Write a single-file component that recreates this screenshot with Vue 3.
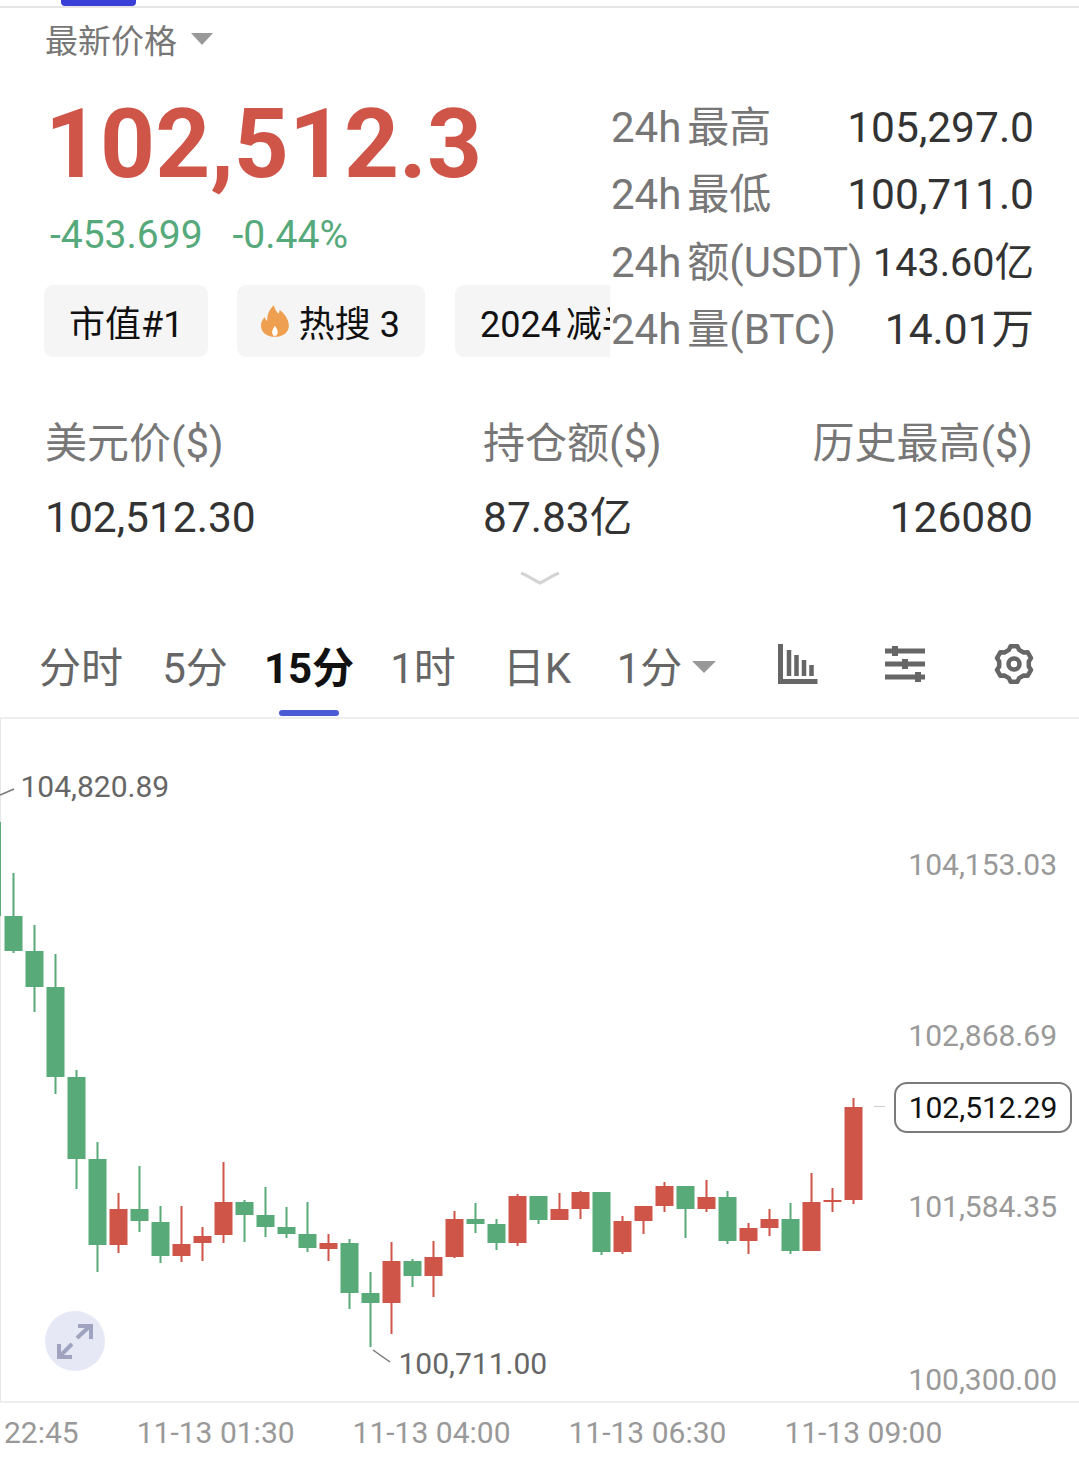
<script setup>
// [center x, wick top, wick bottom, body top, body bottom, up?]
const G = 0
const R = 1
const candles = [
  [0, 822, 916, 916, 916, G],
  [13.5, 873, 953, 916, 951, G],
  [34.5, 925, 1012, 951, 987, G],
  [55.5, 954, 1094, 987, 1077, G],
  [76.5, 1070, 1189, 1077, 1159, G],
  [97.5, 1142, 1272, 1159, 1245, G],
  [118.5, 1193, 1253, 1209, 1245, R],
  [139.5, 1166, 1232, 1209, 1221, G],
  [160.5, 1206, 1263, 1222, 1256, G],
  [181.5, 1206, 1262, 1244, 1256, R],
  [202.5, 1227, 1261, 1236, 1243, R],
  [223.5, 1162, 1243, 1202, 1235, R],
  [244.5, 1200, 1242, 1202, 1215, G],
  [265.5, 1187, 1237, 1215, 1227, G],
  [286.5, 1207, 1238, 1227, 1234, G],
  [307.5, 1202, 1252, 1234, 1248, G],
  [328.5, 1234, 1261, 1243, 1249, R],
  [349.5, 1239, 1309, 1243, 1293, G],
  [370.5, 1272, 1347, 1293, 1303, G],
  [391.5, 1242, 1334, 1261, 1303, R],
  [412.5, 1259, 1287, 1261, 1276, G],
  [433.5, 1241, 1297, 1257, 1276, R],
  [454.5, 1211, 1258, 1219, 1257, R],
  [475.5, 1203, 1233, 1219, 1224, G],
  [496.5, 1219, 1250, 1224, 1243, G],
  [517.5, 1194, 1246, 1196, 1243, R],
  [538.5, 1196, 1224, 1196, 1220, G],
  [559.5, 1193, 1220, 1209, 1220, R],
  [580.5, 1191, 1219, 1192, 1209, R],
  [601.5, 1192, 1255, 1192, 1252, G],
  [622.5, 1216, 1254, 1221, 1252, R],
  [643.5, 1206, 1234, 1206, 1221, R],
  [664.5, 1182, 1212, 1186, 1206, R],
  [685.5, 1186, 1238, 1186, 1209, G],
  [706.5, 1180, 1212, 1197, 1209, R],
  [727.5, 1191, 1244, 1197, 1241, G],
  [748.5, 1223, 1254, 1228, 1241, R],
  [769.5, 1209, 1236, 1219, 1228, R],
  [790.5, 1203, 1254, 1219, 1251, G],
  [811.5, 1173, 1251, 1202, 1251, R],
  [832.5, 1188, 1212, 1200, 1202, R],
  [853.5, 1098, 1204, 1107, 1200, R],
]

const summaryStats = [
  { label: '最高', value: '105,297.0' },
  { label: '最低', value: '100,711.0' },
  { label: '额(USDT)', value: '143.60亿', small: true },
  { label: '量(BTC)', value: '14.01万' },
]

const metrics = [
  { label: '美元价($)', value: '102,512.30' },
  { label: '持仓额($)', value: '87.83亿' },
  { label: '历史最高($)', value: '126080' },
]

const tabs = ['分时', '5分', '15分', '1时', '日K']
const axisPrices = [
  { y: 875, text: '104,153.03' },
  { y: 1046, text: '102,868.69' },
  { y: 1217, text: '101,584.35' },
  { y: 1390, text: '100,300.00' },
]
const times = ['22:45', '11-13 01:30', '11-13 04:00', '11-13 06:30', '11-13 09:00']

// six-lobed gear outline for the settings icon
function gearPath() {
  const pts = []
  for (let i = 0; i < 6; i++) {
    const a = (i * 60 - 90) * Math.PI / 180
    for (const [off, r] of [[-20, 15], [-11, 18], [11, 18], [20, 15]]) {
      const t = a + off * Math.PI / 180
      pts.push(`${(20 + r * Math.cos(t)).toFixed(1)} ${(20 + r * Math.sin(t)).toFixed(1)}`)
    }
  }
  return 'M' + pts.join('L') + 'Z'
}
</script>

<template>
  <div class="page">
    <div class="top-tab"><span class="top-bar"></span></div>

    <div class="summary">
      <div class="summary-left">
        <div class="price-mode">最新价格<i class="caret caret-lg"></i></div>
        <div class="last-price">102,512.3</div>
        <div class="change"><span>-453.699</span><span>-0.44%</span></div>
        <div class="chips">
          <div class="chip chip-a">市值#1</div>
          <div class="chip chip-b">
            <svg class="flame" viewBox="0 0 30 34" width="30" height="34">
              <path d="M14 0c1 5 3 7 5 9 1-1 1-3 1-4 5 4 10 10 10 17 0 7-6 12-15 12S0 29 0 22c0-4 2-7 4-9 1 2 1 3 3 4C6 11 9 4 14 0z" fill="#ee9f4f" />
              <path d="M15 22c2 3 3 5 3 7s-1 4-3 4-3-2-3-4 1-4 3-7z" fill="#fff" />
            </svg>
            <span>热搜 3</span>
          </div>
          <div class="chip chip-c">2024 减半</div>
        </div>
      </div>
      <div class="summary-right">
        <div v-for="s in summaryStats" :key="s.label" class="stat">
          <span class="stat-label"><span class="stat-prefix">24h</span>{{ s.label }}</span>
          <span class="stat-value" :class="{ small: s.small }">{{ s.value }}</span>
        </div>
      </div>
    </div>

    <div class="metrics">
      <div v-for="m in metrics" :key="m.label" class="metric">
        <div class="metric-label">{{ m.label }}</div>
        <div class="metric-value">{{ m.value }}</div>
      </div>
    </div>

    <div class="more">
      <svg width="42" height="16" viewBox="0 0 42 16">
        <path d="M2 3 C12 7 16 11 21 13 C26 11 30 7 40 3" fill="none" stroke="#d4d4d4" stroke-width="3" />
      </svg>
    </div>

    <div class="tabs">
      <div v-for="t in tabs" :key="t" class="tab" :class="{ active: t === '15分' }">{{ t }}</div>
      <div class="tab tab-period">1分<i class="caret caret-tab"></i></div>
      <div class="tool tool-first">
        <svg class="icon-bars" width="40" height="40" viewBox="0 0 40 40">
          <path d="M2.500 0v37.500h37" fill="none" stroke="#666" stroke-width="5" />
          <path d="M11 6v26M18.500 11v21M26 16v16M33.500 21v11" fill="none" stroke="#666" stroke-width="4.500" />
        </svg>
      </div>
      <div class="tool">
        <svg width="40" height="36" viewBox="0 0 40 36">
          <path d="M0 5h40M0 18h40M0 31h40" stroke="#666" stroke-width="5" />
          <path d="M7 0h6v10h-6zM17 13h6v10h-6zM30 26h6v10h-6z" fill="#666" />
        </svg>
      </div>
      <div class="tool">
        <svg class="icon-gear" width="40" height="40" viewBox="0 0 40 40">
          <path :d="gearPath()" fill="none" stroke="#666" stroke-width="4.500" stroke-linejoin="round" />
          <circle cx="20" cy="20" r="5.500" fill="none" stroke="#666" stroke-width="4.500" />
        </svg>
      </div>
    </div>

    <div class="chart">
      <svg class="plot" width="1079" height="682" viewBox="0 719 1079 682">
        <line x1="0.500" y1="719" x2="0.500" y2="1402" stroke="#e6e6e6" />
        <g v-for="(c, i) in candles" :key="i" :fill="c[5] === R ? '#cf5548' : '#58aa78'">
          <rect :x="c[0] - 1" :y="c[1]" width="2" :height="c[2] - c[1]" />
          <rect :x="c[0] - 9" :y="c[3]" width="18" :height="c[4] - c[3]" />
        </g>

        <path d="M0 795 L14 789" stroke="#777" stroke-width="1.500" />
        <text x="20.500" y="797" class="peak">104,820.89</text>
        <path d="M373 1350 L390 1362" stroke="#777" stroke-width="1.500" />
        <text x="398.500" y="1374" class="peak">100,711.00</text>

        <text v-for="p in axisPrices" :key="p.y" x="1057" :y="p.y" class="axis">{{ p.text }}</text>

        <line x1="874" y1="1106.500" x2="885" y2="1106.500" stroke="#ccc" />
        <rect x="895" y="1083" width="176" height="49" rx="12" fill="#fff" stroke="#7b7b7b" stroke-width="2" />
        <text x="983" y="1118" class="current">102,512.29</text>

        <circle cx="75" cy="1341" r="30" fill="#e6e8f6" />
        <path d="M77 1338 L90 1326M78 1326 H91 V1339M72 1344 L60 1356M59 1344 V1357 H72" fill="none" stroke="#9fa3bf" stroke-width="4" />
      </svg>
    </div>

    <div class="times">
      <span v-for="t in times" :key="t">{{ t }}</span>
    </div>
  </div>
</template>

<style scoped>
.page {
  width: 1079px;
  height: 1473px;
  overflow: hidden;
  background: #fff;
  font-family: Roboto, "Noto Sans CJK SC", sans-serif;
}
.top-tab {
  height: 6px;
  border-bottom: 2px solid #e6e6e6;
  padding-left: 61px;
}
.top-bar {
  display: block;
  width: 75px;
  height: 6px;
  background: #3a3fd8;
  border-radius: 0 0 4px 4px;
}
.summary {
  display: flex;
  height: 381px;
}
.summary-left {
  width: 610px;
  overflow: hidden;
  flex: none;
}
.price-mode {
  display: flex;
  align-items: center;
  height: 62px;
  padding-left: 45px;
  font-size: 33px;
  color: #777;
}
.caret {
  display: inline-block;
  width: 0;
  height: 0;
  border-style: solid;
  border-color: #999 transparent transparent;
}
.caret-lg {
  margin-left: 14px;
  border-width: 12px 11px 0;
}
.last-price {
  height: 110px;
  line-height: 110px;
  margin-top: 19px;
  padding-left: 45px;
  font-size: 96px;
  font-weight: 700;
  color: #cf5549;
}
.change {
  display: flex;
  gap: 30px;
  height: 50px;
  line-height: 50px;
  margin-top: 11px;
  padding-left: 50px;
  font-size: 39px;
  color: #55a97b;
}
.chips {
  display: flex;
  margin-top: 25px;
  padding-left: 44px;
}
.chip {
  display: flex;
  align-items: center;
  flex: none;
  height: 72px;
  margin-right: 29px;
  padding: 0 25px;
  background: #f5f5f5;
  border-radius: 9px;
  font-size: 36px;
  color: #111;
  white-space: nowrap;
  box-sizing: border-box;
}
.chip-a {
  width: 164px;
}
.chip-b {
  width: 188px;
  margin-right: 30px;
  padding-left: 24px;
}
.chip-c {
  word-spacing: -4px;
}
.flame {
  margin-right: 10px;
}
.summary-right {
  flex: 1;
  padding: 85.500px 45px 0 1px;
}
.stat {
  display: flex;
  justify-content: space-between;
  align-items: center;
  height: 67.500px;
  line-height: 67.500px;
  font-size: 42px;
  white-space: nowrap;
}
.stat-label {
  color: #777;
}
.stat-prefix {
  margin-right: 6px;
}
.stat-value {
  font-size: 42.500px;
  color: #333;
}
.stat-value.small {
  font-size: 39.500px;
}
.metrics {
  display: grid;
  grid-template-columns: 438px 1fr auto;
  padding: 18px 46px 0 45px;
}
.metric:last-child {
  text-align: right;
}
.metric-label {
  height: 74px;
  line-height: 74px;
  font-size: 42px;
  color: #777;
}
.metric-value {
  height: 74px;
  line-height: 74px;
  font-size: 42.500px;
  color: #333;
}
.more {
  display: flex;
  justify-content: center;
  height: 60px;
  padding-top: 15px;
  box-sizing: border-box;
}
.tabs {
  display: flex;
  align-items: center;
  height: 74px;
  padding: 12px 0 0 24px;
}
.tab {
  position: relative;
  flex: none;
  width: 114px;
  text-align: center;
  font-size: 42px;
  color: #666;
}
.tab.active {
  font-weight: 700;
  color: #111;
}
.tab.active::after {
  content: "";
  position: absolute;
  left: 27px;
  top: 76px;
  width: 60px;
  height: 6px;
  border-radius: 3px;
  background: #4a5bd4;
}
.tab-period {
  box-sizing: border-box;
  padding-right: 3px;
}
.caret-tab {
  position: absolute;
  margin: 27px 0 0 10px;
  border-width: 12px 12px 0;
}
.tool {
  display: flex;
  justify-content: center;
  flex: none;
  width: 108.500px;
}
.tool-first {
  margin-left: 34px;
}
.icon-bars {
  margin-left: 4px;
}
.icon-gear {
  margin-left: 2px;
}
.chart {
  margin-top: 16px;
  border-top: 2px solid #eee;
  border-bottom: 2px solid #eee;
  height: 682px;
}
.plot {
  display: block;
}
.peak {
  font-size: 30px;
  fill: #666;
}
.axis {
  font-size: 30px;
  fill: #999;
  text-anchor: end;
}
.current {
  font-size: 30px;
  fill: #111;
  text-anchor: middle;
}
.times {
  display: flex;
  gap: 58px;
  padding: 12px 0 0 4px;
  font-size: 30px;
  color: #999;
  white-space: nowrap;
}
</style>
